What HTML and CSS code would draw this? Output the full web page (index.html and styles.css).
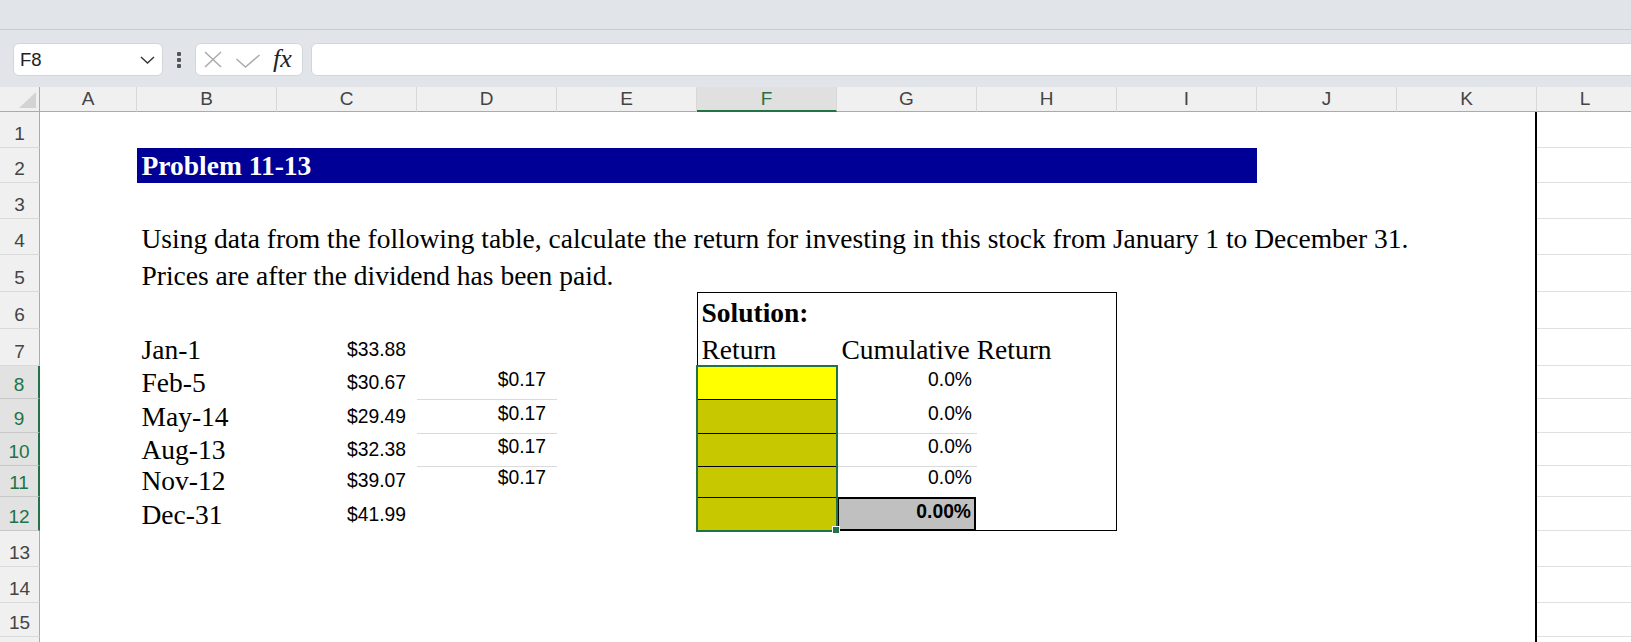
FILE: index.html
```html
<!DOCTYPE html>
<html>
<head>
<meta charset="utf-8">
<title>Problem 11-13</title>
<link rel="stylesheet" href="styles.css">
</head>
<body>
<div class="app">
  <div class="ribbon-edge"></div>
  <div class="fbar">
    <div class="namebox">
      <span class="nb-text">F8</span>
      <svg class="chev" width="15" height="8" viewBox="0 0 15 8"><polyline points="1,1 7.5,7 14,1" fill="none" stroke="#333" stroke-width="1.4"/></svg>
    </div>
    <div class="dots"><span></span><span></span><span></span></div>
    <div class="fxbox">
      <svg class="ico-x" width="18" height="17" viewBox="0 0 18 17"><line x1="1" y1="1" x2="17" y2="16" stroke="#aaa" stroke-width="1.5"/><line x1="17" y1="1" x2="1" y2="16" stroke="#aaa" stroke-width="1.5"/></svg>
      <svg class="ico-check" width="24" height="14" viewBox="0 0 24 14"><polyline points="0.5,5 9.5,13 23.5,1" fill="none" stroke="#aaa" stroke-width="1.5"/></svg>
      <span class="fx">fx</span>
    </div>
    <div class="finput"></div>
  </div>

  <div class="sheet">
    <!-- column headers -->
    <div class="corner"><svg width="39" height="24" viewBox="0 0 39 24"><polygon points="36,5 36,21 19,21" fill="#d3d3d3"/></svg></div>
    <div class="colhdr ca">A</div>
    <div class="colhdr cb">B</div>
    <div class="colhdr cc">C</div>
    <div class="colhdr cd">D</div>
    <div class="colhdr ce">E</div>
    <div class="colhdr cf sel">F</div>
    <div class="colhdr cg">G</div>
    <div class="colhdr ch">H</div>
    <div class="colhdr ci">I</div>
    <div class="colhdr cj">J</div>
    <div class="colhdr ck">K</div>
    <div class="colhdr cl">L</div>

    <!-- row headers -->
    <div class="rowhdr r1">1</div>
    <div class="rowhdr r2">2</div>
    <div class="rowhdr r3">3</div>
    <div class="rowhdr r4">4</div>
    <div class="rowhdr r5">5</div>
    <div class="rowhdr r6">6</div>
    <div class="rowhdr r7">7</div>
    <div class="rowhdr r8 sel">8</div>
    <div class="rowhdr r9 sel">9</div>
    <div class="rowhdr r10 sel">10</div>
    <div class="rowhdr r11 sel">11</div>
    <div class="rowhdr r12 sel">12</div>
    <div class="rowhdr r13">13</div>
    <div class="rowhdr r14">14</div>
    <div class="rowhdr r15">15</div>
    <div class="rowhdr r16"></div>

    <!-- gridlines in column L -->
    <div class="lg r1"></div>
    <div class="lg r2"></div>
    <div class="lg r3"></div>
    <div class="lg r4"></div>
    <div class="lg r5"></div>
    <div class="lg r6"></div>
    <div class="lg r7"></div>
    <div class="lg r8"></div>
    <div class="lg r9"></div>
    <div class="lg r10"></div>
    <div class="lg r11"></div>
    <div class="lg r12"></div>
    <div class="lg r13"></div>
    <div class="lg r14"></div>
    <div class="lg r15"></div>
    <div class="kline"></div>

    <!-- content -->
    <div class="cell tx title r2">Problem 11-13</div>
    <div class="cell tx cb r4">Using data from the following table, calculate the return for investing in this stock from January 1 to December 31.</div>
    <div class="cell tx cb r5">Prices are after the dividend has been paid.</div>

    <div class="cell tx bold cf r6">Solution:</div>
    <div class="cell tx cf r7">Return</div>
    <div class="cell tx cg r7">Cumulative Return</div>

    <div class="cell tx cb r7">Jan-1</div>
    <div class="cell tx cb r8">Feb-5</div>
    <div class="cell tx cb r9">May-14</div>
    <div class="cell tx cb r10">Aug-13</div>
    <div class="cell tx cb r11">Nov-12</div>
    <div class="cell tx cb r12">Dec-31</div>

    <div class="cell ar pc cc r7">$33.88</div>
    <div class="cell ar pc cc r8">$30.67</div>
    <div class="cell ar pc cc r9">$29.49</div>
    <div class="cell ar pc cc r10">$32.38</div>
    <div class="cell ar pc cc r11">$39.07</div>
    <div class="cell ar pc cc r12">$41.99</div>

    <div class="cell ar pd cd r8">$0.17</div>
    <div class="cell ar pd gtop cd r9">$0.17</div>
    <div class="cell ar pd gtop cd r10">$0.17</div>
    <div class="cell ar pd gtop cd r11">$0.17</div>

    <div class="cell fy cf r8"></div>
    <div class="cell fo cf r9"></div>
    <div class="cell fo cf r10"></div>
    <div class="cell fo cf r11"></div>
    <div class="cell fo cf r12"></div>

    <div class="cell ar pg cg r8">0.0%</div>
    <div class="cell ar pg cg r9">0.0%</div>
    <div class="cell ar pg gtop cg r10">0.0%</div>
    <div class="cell ar pg gtop cg r11">0.0%</div>

    <div class="box"></div>
    <div class="cell ar total cg r12">0.00%</div>

    <div class="selection"><span class="handle"></span></div>
  </div>
</div>
</body>
</html>
```

FILE: styles.css
```css
html, body {
  margin: 0;
  padding: 0;
  overflow: hidden;
  background: #ffffff;
}

.app {
  width: 1631px;
  height: 642px;
  overflow: hidden;
  background: #ffffff;
}

.ribbon-edge {
  height: 29px;
  background: #e1e5e9;
  border-bottom: 1px solid #c9cdd1;
}

.fbar {
  height: 57px;
  box-sizing: border-box;
  padding: 13px 0 0 13px;
  background: #e1e5e9;
  display: flex;
  align-items: flex-start;
}

.namebox {
  width: 150px;
  height: 33px;
  box-sizing: border-box;
  border: 1px solid #d3d6d9;
  border-radius: 6px;
  background: #ffffff;
  display: flex;
  align-items: center;
  justify-content: space-between;
  padding: 0 7px 0 6px;
  font-family: "Liberation Sans", Arial, sans-serif;
  font-size: 18.5px;
  color: #222;
}

.chev {
  display: block;
}

.dots {
  margin-left: 14px;
  padding-top: 9px;
  display: flex;
  flex-direction: column;
  gap: 2.5px;
}

.dots span {
  display: block;
  width: 4px;
  height: 3.5px;
  border-radius: 1px;
  background: #555;
}

.fxbox {
  margin-left: 14px;
  width: 108px;
  height: 33px;
  box-sizing: border-box;
  border: 1px solid #d3d6d9;
  border-radius: 6px;
  background: #ffffff;
  display: flex;
  align-items: center;
  padding-left: 8px;
}

.ico-x {
  display: block;
}

.ico-check {
  display: block;
  margin-left: 14px;
  margin-top: 2px;
}

.fx {
  margin-left: 13px;
  font-family: "Liberation Serif", "Times New Roman", serif;
  font-style: italic;
  font-size: 26px;
  color: #222;
  line-height: 1;
  margin-top: -2px;
}

.finput {
  margin-left: 8px;
  margin-right: -12px;
  flex: 1;
  height: 33px;
  box-sizing: border-box;
  border: 1px solid #d3d6d9;
  border-radius: 6px;
  background: #ffffff;
}

/* sheet grid */
.sheet {
  display: grid;
  grid-template-columns: 40px 97px repeat(10, 140px) 97px;
  grid-template-rows: 25px 36px 35px 36px 36px 37px 37px 37px 33px 34px 33px 31px 34px 36px 36px 34px 36px;
  background: #ffffff;
}

.sheet > div {
  box-sizing: border-box;
  min-width: 0;
}

/* column placement */
.ca { grid-column: 2; }
.cb { grid-column: 3; }
.cc { grid-column: 4; }
.cd { grid-column: 5; }
.ce { grid-column: 6; }
.cf { grid-column: 7; }
.cg { grid-column: 8; }
.ch { grid-column: 9; }
.ci { grid-column: 10; }
.cj { grid-column: 11; }
.ck { grid-column: 12; }
.cl { grid-column: 13; }

/* row placement */
.r1 { grid-row: 2; }
.r2 { grid-row: 3; }
.r3 { grid-row: 4; }
.r4 { grid-row: 5; }
.r5 { grid-row: 6; }
.r6 { grid-row: 7; }
.r7 { grid-row: 8; }
.r8 { grid-row: 9; }
.r9 { grid-row: 10; }
.r10 { grid-row: 11; }
.r11 { grid-row: 12; }
.r12 { grid-row: 13; }
.r13 { grid-row: 14; }
.r14 { grid-row: 15; }
.r15 { grid-row: 16; }
.r16 { grid-row: 17; }

.corner {
  grid-row: 1;
  grid-column: 1;
  background: #f0f0f0;
  border-right: 1px solid #ababab;
  border-bottom: 1px solid #ababab;
}

.corner svg {
  display: block;
}

.colhdr {
  grid-row: 1;
  background: #f0f0f0;
  border-right: 1px solid #d8d8d8;
  border-bottom: 1px solid #ababab;
  display: flex;
  align-items: center;
  justify-content: center;
  font-family: "Liberation Sans", Arial, sans-serif;
  font-size: 19px;
  color: #444;
}

.colhdr.sel {
  background: #e0e0e0;
  color: #217346;
  border-bottom: 2px solid #217346;
}

.rowhdr {
  grid-column: 1;
  background: #f0f0f0;
  border-right: 1px solid #ababab;
  border-bottom: 1px solid #dadada;
  display: flex;
  align-items: flex-end;
  justify-content: center;
  padding-bottom: 2px;
  font-family: "Liberation Sans", Arial, sans-serif;
  font-size: 19px;
  color: #444;
}

.rowhdr.sel {
  background: #e2e2e2;
  color: #217346;
  border-right: 2px solid #217346;
  border-bottom-color: #c8c8c8;
}

.lg {
  grid-column: 13;
  border-bottom: 1px solid #e0e0e0;
}

.kline {
  grid-column: 12;
  grid-row: 2 / 18;
  border-right: 2px solid #000000;
}

/* cells */
.cell {
  display: flex;
  align-items: flex-end;
  white-space: nowrap;
  color: #000000;
}

.tx {
  font-family: "Liberation Serif", "Times New Roman", serif;
  font-size: 27.5px;
  padding: 0 4px 0 4.5px;
}

.bold {
  font-weight: bold;
}

.title {
  grid-column: 3 / 11;
  background: #000096;
  color: #ffffff;
  font-weight: bold;
  padding-bottom: 1px;
}

.ar {
  font-family: "Liberation Sans", Arial, sans-serif;
  font-size: 19.3px;
  justify-content: flex-end;
}

.pc { padding: 0 11px 5.5px 0; }
.pd { padding: 0 11px 8.5px 0; }
.pg { padding: 0 5px 8px 0; }

.gtop {
  border-top: 1px solid #dadada;
}

.fy {
  background: #ffff00;
}

.fo {
  background: #c8c800;
  border-top: 1px solid #000000;
}

.box {
  grid-column: 7 / 10;
  grid-row: 7 / 14;
  border: 1px solid #000000;
}

.total {
  background: #c0c0c0;
  border: 2px solid #000000;
  font-weight: bold;
  padding: 0 3px 6px 0;
  margin-right: 1px;
}

.selection {
  grid-column: 7;
  grid-row: 9 / 14;
  margin: -1px -1px -1px -1px;
  border: 2px solid #217346;
  position: relative;
}

.handle {
  position: absolute;
  right: -4px;
  bottom: -4px;
  width: 6px;
  height: 6px;
  background: #217346;
  border: 1px solid #ffffff;
}
```
